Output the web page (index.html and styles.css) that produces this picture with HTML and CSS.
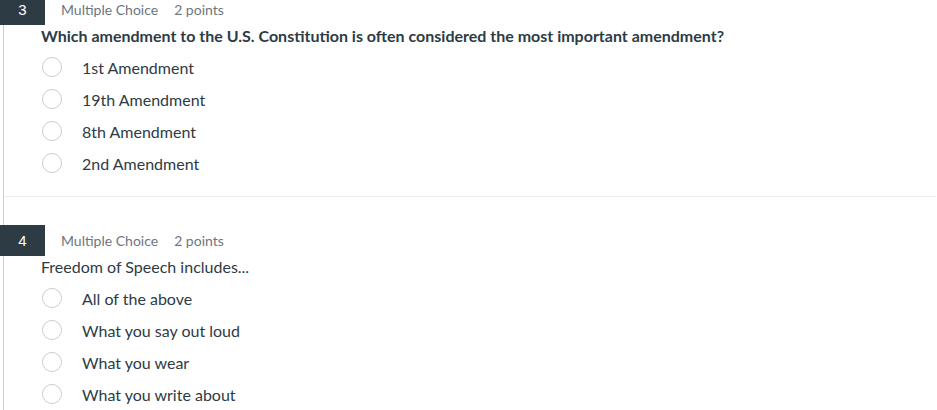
FILE: index.html
```html
<!DOCTYPE html>
<html>
<head>
<meta charset="utf-8">
<link rel="stylesheet" href="styles.css">
</head>
<body>
<div class="quiz">
  <div class="question first">
    <div class="qhead">
      <div class="badge">3</div>
      <div class="meta"><span>Multiple Choice</span><span>2 points</span></div>
    </div>
    <div class="qtext bold">Which amendment to the U.S. Constitution is often considered the most important amendment?</div>
    <ul class="options">
      <li><span class="radio"></span><span>1st Amendment</span></li>
      <li><span class="radio"></span><span>19th Amendment</span></li>
      <li><span class="radio"></span><span>8th Amendment</span></li>
      <li><span class="radio"></span><span>2nd Amendment</span></li>
    </ul>
  </div>
  <div class="question second">
    <div class="qhead">
      <div class="badge">4</div>
      <div class="meta"><span>Multiple Choice</span><span>2 points</span></div>
    </div>
    <div class="qtext">Freedom of Speech includes...</div>
    <ul class="options">
      <li><span class="radio"></span><span>All of the above</span></li>
      <li><span class="radio"></span><span>What you say out loud</span></li>
      <li><span class="radio"></span><span>What you wear</span></li>
      <li><span class="radio"></span><span>What you write about</span></li>
    </ul>
  </div>
</div>
</body>
</html>
```
FILE: styles.css
```css
html, body {
  margin: 0;
  padding: 0;
  background: #ffffff;
  overflow: hidden;
}
body {
  font-family: Lato, "Open Sans", sans-serif;
  color: #2d3b45;
}
.quiz {
  margin-left: 3px;
  border-left: 1px solid #c7cdd1;
  min-height: 420px;
  margin-right: 1px;
}
.question {
  padding-left: 37px;
}
.question.first {
  margin-top: -6px;
  padding-bottom: 17px;
  border-bottom: 1px solid #eeeeee;
}
.question.second {
  margin-top: 28px;
}
.qhead {
  display: flex;
  align-items: center;
  height: 31px;
  margin-left: -41px;
}
.badge {
  width: 45px;
  height: 31px;
  line-height: 31px;
  background: #2d3b45;
  color: #ffffff;
  text-align: center;
  font-family: "Liberation Sans", Arial, sans-serif;
  font-size: 15px;
}
.meta {
  display: flex;
  gap: 16px;
  margin-left: 16px;
  font-size: 14px;
  color: #6b7780;
}
.qtext {
  font-size: 16px;
  line-height: 22px;
}
.qtext.bold {
  font-weight: bold;
}
.options {
  list-style: none;
  margin: 4px 0 0 0;
  padding: 0;
}
.options li {
  display: flex;
  align-items: center;
  height: 32px;
  font-size: 16px;
}
.radio {
  box-sizing: border-box;
  width: 20px;
  height: 20px;
  border: 1px solid #c7cdd1;
  border-radius: 50%;
  margin-left: 1px;
  margin-right: 20px;
  flex: none;
}
```
